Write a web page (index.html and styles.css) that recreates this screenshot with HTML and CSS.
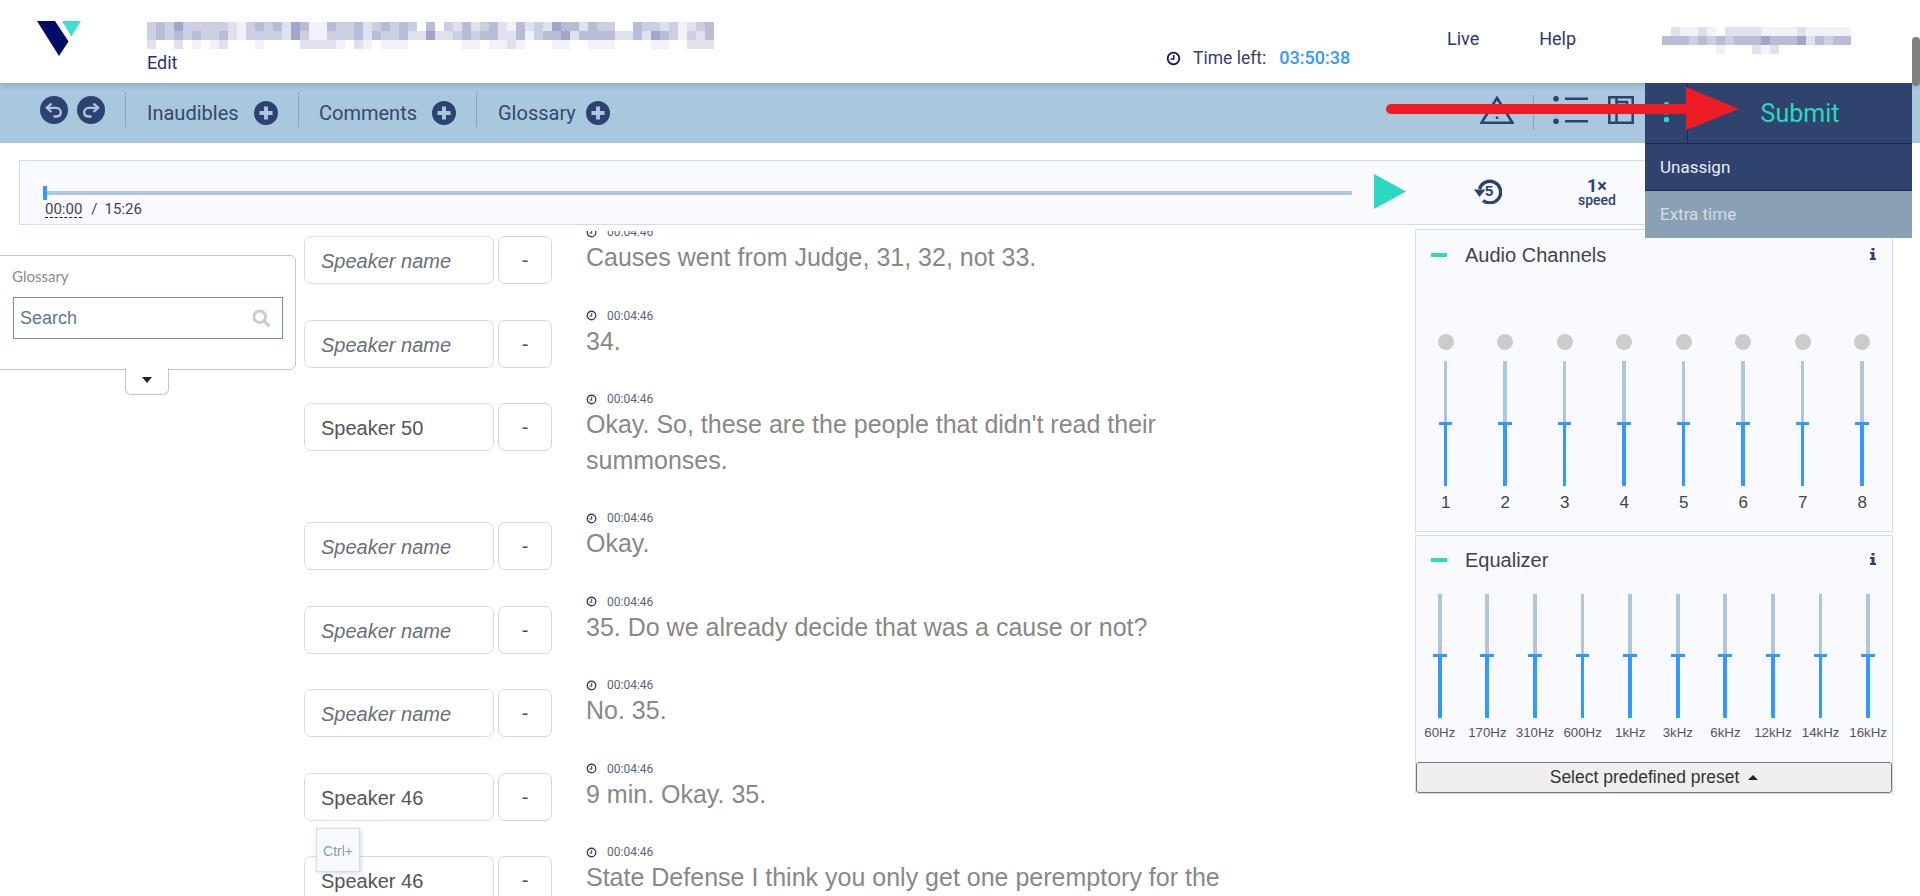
FILE: index.html
```html
<!DOCTYPE html>
<html lang="en">
<head>
<meta charset="utf-8">
<title>Transcript editor</title>
<link rel="stylesheet" href="styles.css">
</head>
<body>
<svg width="0" height="0" class="defs">
  <symbol id="clock" viewBox="0 0 16 16"><circle cx="8" cy="8" r="6.2" fill="none" stroke="currentColor" stroke-width="1.9"/><path d="M8.3 4.2V8.6H5" fill="none" stroke="currentColor" stroke-width="1.5"/></symbol>
  <symbol id="plus" viewBox="0 0 24 24"><circle cx="12" cy="12" r="12" fill="#2e4272"/><path d="M12 5.5v13M5.5 12h13" stroke="#a9c8dd" stroke-width="4"/></symbol>
</svg>

<header class="topbar">
  <svg class="logo" viewBox="0 0 44 35" width="44" height="35"><path d="M0 0H18L31.500 20.500L22 35Z" fill="#020c66"/><path d="M25 0H44L34.300 15.500Z" fill="#3fe0cf"/></svg>
  <div class="title-block">
    <svg class="blur blur-title" viewBox="0 0 64 3" width="576" height="27" shape-rendering="crispEdges">
      <path class="l1" d="M10 .5h1M18 .5h2M40 .5h1M59 .5h1M10 1.500h1M18 1.500h2M42 1.500h1M59 1.500h1M5 2.500h1M7 2.500h1M12 2.500h1M21 2.500h1M24 2.500h1M26 2.500h3M35 2.500h2M38 2.500h2M41 2.500h1M45 2.500h2M49 2.500h3M56 2.500h2"/>
      <path class="l2" d="M9 .5h1M15 .5h1M24 .5h1M34 .5h1M36 .5h1M39 .5h1M42 .5h1M44 .5h1M48 .5h1M57 .5h1M60 .5h1M9 1.500h1M15 1.500h1M24 1.500h1M29 1.500h2M32 1.500h2M39 1.500h2M47 1.500h1M52 1.500h2M55 1.500h1M61 1.500h1M0 2.500h1M3 2.500h1M8 2.500h1M17 2.500h4M23 2.500h1M40 2.500h1M60 2.500h3"/>
      <path class="l3" d="M0 .5h1M2 .5h1M4 .5h5M11 .5h1M13 .5h1M21 .5h2M25 .5h1M27 .5h1M29 .5h1M33 .5h1M37 .5h1M43 .5h1M50 .5h2M55 .5h2M58 .5h1M61 .5h1M0 1.500h1M2 1.500h1M4 1.500h1M6 1.500h2M11 1.500h4M17 1.500h1M20 1.500h3M26 1.500h2M34 1.500h1M36 1.500h1M43 1.500h1M58 1.500h1M60 1.500h1"/>
      <path class="l4" d="M1 .5h1M12 .5h1M14 .5h1M17 .5h1M20 .5h1M23 .5h1M26 .5h1M28 .5h1M31 .5h1M35 .5h1M38 .5h1M41 .5h1M46 .5h2M49 .5h1M54 .5h1M62 .5h1M1 1.500h1M3 1.500h1M5 1.500h1M8 1.500h1M23 1.500h1M25 1.500h1M28 1.500h1M35 1.500h1M37 1.500h2M41 1.500h1M44 1.500h2M48 1.500h4M54 1.500h1M57 1.500h1M62 1.500h1"/>
      <path class="l5" d="M3 .5h1M16 .5h1M45 .5h1M16 1.500h1M31 1.500h1M46 1.500h1M56 1.500h1"/>
    </svg>
    <a class="edit-link">Edit</a>
  </div>
  <div class="time-left">
    <svg class="clock-big"><use href="#clock"/></svg>
    <span>Time left:</span>
    <strong>03:50:38</strong>
  </div>
  <nav class="top-nav"><a>Live</a><a>Help</a></nav>
  <svg class="blur blur-user" viewBox="0 0 21 3" width="189" height="27" shape-rendering="crispEdges">
    <path class="l1" d="M2 .5h2M5 .5h1M11 .5h4M16 .5h5M6 2.500h1M11 2.500h1"/>
    <path class="l2" d="M1 .5h1M4 .5h1M7 .5h4M15 .5h1M16 1.500h1M10 2.500h1M12 2.500h1"/>
    <path class="l3" d="M3 1.500h1M5 1.500h1M7 1.500h1M18 1.500h1"/>
    <path class="l4" d="M0 1.500h3M4 1.500h1M6 1.500h1M8 1.500h3M12 1.500h3M17 1.500h1M19 1.500h2"/>
    <path class="l5" d="M11 1.500h1M15 1.500h1"/>
  </svg>
</header>

<section class="toolbar">
  <button class="round-btn"><svg viewBox="0 0 28 28" width="28" height="28"><circle cx="14" cy="14" r="14" fill="#2e4272"/><path d="M11.500 7.500L6.800 11.800L11.500 16M7.500 11.800H16C19 11.800 20.800 14 20.800 16.300C20.800 18.800 19 20.500 16.500 20.500H13.500" fill="none" stroke="#a9c8dd" stroke-width="2.300"/></svg></button>
  <button class="round-btn"><svg viewBox="0 0 28 28" width="28" height="28"><circle cx="14" cy="14" r="14" fill="#2e4272"/><path d="M16.500 7.500L21.200 11.800L16.500 16M20.500 11.800H12C9 11.800 7.200 14 7.200 16.300C7.200 18.800 9 20.500 11.500 20.500H14.500" fill="none" stroke="#a9c8dd" stroke-width="2.300"/></svg></button>
  <span class="tool-sep first"></span>
  <span class="tool-label inaudibles">Inaudibles</span><svg class="plus-icon"><use href="#plus"/></svg>
  <span class="tool-sep"></span>
  <span class="tool-label comments">Comments</span><svg class="plus-icon"><use href="#plus"/></svg>
  <span class="tool-sep"></span>
  <span class="tool-label glossary-label">Glossary</span><svg class="plus-icon tight"><use href="#plus"/></svg>
  <div class="tool-right">
    <svg class="tool-icon" viewBox="0 0 34 28" width="34" height="28"><path d="M17 2L32.500 26.700H1.500Z" fill="none" stroke="#2e4272" stroke-width="2.600"/><path d="M17 11v7M17 20.500v2.500" stroke="#2e4272" stroke-width="2.400"/></svg>
    <span class="tool-sep slim"></span>
    <svg class="tool-icon" viewBox="0 0 35 28" width="35" height="28"><circle cx="3" cy="2.800" r="2.800" fill="#2e4272"/><circle cx="3" cy="25.200" r="2.800" fill="#2e4272"/><path d="M12 2.800H35M12 25.200H35" stroke="#2e4272" stroke-width="2.600"/></svg>
    <svg class="tool-icon layout" viewBox="0 0 26 28" width="26" height="28"><path d="M1.300 1.300H24.700V26.700H1.300ZM8.500 1.300V26.700M8.500 6H19V16" fill="none" stroke="#2e4272" stroke-width="2.500"/></svg>
  </div>
</section>

<div class="action-menu">
  <div class="action-head">
    <span class="kebab"><svg viewBox="0 0 5 20" width="5" height="20"><rect y="0" width="5" height="5" rx="1.500" fill="#2bd9c0"/><rect y="7.500" width="5" height="5" rx="1.500" fill="#2bd9c0"/><rect y="15" width="5" height="5" rx="1.500" fill="#2bd9c0"/></svg></span>
    <span class="submit">Submit</span>
  </div>
  <div class="action-item">Unassign</div>
  <div class="action-item muted">Extra time</div>
</div>

<svg class="red-arrow" viewBox="0 0 353 43" width="353" height="43"><path d="M5 22H305" stroke="#ed1c24" stroke-width="10" stroke-linecap="round"/><path d="M300 0L353 22L300 43Z" fill="#ed1c24"/></svg>
<div class="scroll-thumb"></div>

<section class="player">
  <div class="timeline">
    <div class="track"><span class="track-thumb"></span></div>
    <div class="time-text"><span class="time-current">00:00</span><span class="time-slash">/</span><span>15:26</span></div>
  </div>
  <svg class="play" viewBox="0 0 32 35" width="32" height="35"><path d="M0 0L32 17.500L0 35Z" fill="#2bd9c0"/></svg>
  <div class="replay">
    <svg viewBox="0 0 28 26" width="28" height="26"><path d="M5.500 11A10.800 10.800 0 1 1 9 22.500" fill="none" stroke="#2e4272" stroke-width="3.400"/><path d="M0 11.500H11.500L5.500 19Z" fill="#2e4272"/></svg>
    <span>5</span>
  </div>
  <div class="speed"><b>1×</b><span>speed</span></div>
</section>

<main class="workspace">
  <aside class="left-col">
    <div class="glossary">
      <div class="glossary-title">Glossary</div>
      <div class="search">
        <span>Search</span>
        <svg viewBox="0 0 18 18" width="19" height="19"><circle cx="7.300" cy="7.300" r="5.500" fill="none" stroke="#cccccc" stroke-width="2.800"/><path d="M11.500 11.500L16.500 16.500" stroke="#cccccc" stroke-width="3.200"/></svg>
      </div>
      <div class="glossary-tab"><i></i></div>
    </div>
  </aside>

  <section class="transcript">
    <div class="rows">
      <article class="row"><div class="speaker empty">Speaker name</div><div class="dash">-</div><div class="utterance"><div class="stamp"><svg><use href="#clock"/></svg>00:04:46</div><p>Causes went from Judge, 31, 32, not 33.</p></div></article>
      <article class="row"><div class="speaker empty">Speaker name</div><div class="dash">-</div><div class="utterance"><div class="stamp"><svg><use href="#clock"/></svg>00:04:46</div><p>34.</p></div></article>
      <article class="row"><div class="speaker">Speaker 50</div><div class="dash">-</div><div class="utterance"><div class="stamp"><svg><use href="#clock"/></svg>00:04:46</div><p>Okay. So, these are the people that didn't read their summonses.</p></div></article>
      <article class="row"><div class="speaker empty">Speaker name</div><div class="dash">-</div><div class="utterance"><div class="stamp"><svg><use href="#clock"/></svg>00:04:46</div><p>Okay.</p></div></article>
      <article class="row"><div class="speaker empty">Speaker name</div><div class="dash">-</div><div class="utterance"><div class="stamp"><svg><use href="#clock"/></svg>00:04:46</div><p>35. Do we already decide that was a cause or not?</p></div></article>
      <article class="row"><div class="speaker empty">Speaker name</div><div class="dash">-</div><div class="utterance"><div class="stamp"><svg><use href="#clock"/></svg>00:04:46</div><p>No. 35.</p></div></article>
      <article class="row"><div class="speaker">Speaker 46</div><div class="dash">-</div><div class="utterance"><div class="stamp"><svg><use href="#clock"/></svg>00:04:46</div><p>9 min. Okay. 35.</p></div></article>
      <article class="row"><div class="speaker">Speaker 46<span class="hint">Ctrl+</span></div><div class="dash">-</div><div class="utterance"><div class="stamp"><svg><use href="#clock"/></svg>00:04:46</div><p>State Defense I think you only get one peremptory for the</p></div></article>
    </div>
  </section>

  <aside class="right-col">
    <section class="panel audio">
      <div class="panel-head"><i class="minus"></i><h2>Audio Channels</h2><svg class="info" viewBox="0 0 6 12" width="6" height="12"><path d="M1.500 0h3v2.500h-3ZM0 4h4.500v6H6v2H0v-2h1.500V6H0Z" fill="#2e4272"/></svg></div>
      <div class="channels">
        <div class="channel thin"><i class="dot"></i><div class="slider"></div><span>1</span></div>
        <div class="channel"><i class="dot"></i><div class="slider"></div><span>2</span></div>
        <div class="channel thin"><i class="dot"></i><div class="slider"></div><span>3</span></div>
        <div class="channel"><i class="dot"></i><div class="slider"></div><span>4</span></div>
        <div class="channel thin"><i class="dot"></i><div class="slider"></div><span>5</span></div>
        <div class="channel"><i class="dot"></i><div class="slider"></div><span>6</span></div>
        <div class="channel thin"><i class="dot"></i><div class="slider"></div><span>7</span></div>
        <div class="channel"><i class="dot"></i><div class="slider"></div><span>8</span></div>
      </div>
    </section>
    <section class="panel equalizer">
      <div class="panel-head eq-head"><i class="minus"></i><h2>Equalizer</h2><svg class="info" viewBox="0 0 6 12" width="6" height="12"><path d="M1.500 0h3v2.500h-3ZM0 4h4.500v6H6v2H0v-2h1.500V6H0Z" fill="#2e4272"/></svg></div>
      <div class="bands">
        <div class="band"><div class="slider"></div><span>60Hz</span></div>
        <div class="band"><div class="slider"></div><span>170Hz</span></div>
        <div class="band"><div class="slider"></div><span>310Hz</span></div>
        <div class="band thin"><div class="slider"></div><span>600Hz</span></div>
        <div class="band"><div class="slider"></div><span>1kHz</span></div>
        <div class="band"><div class="slider"></div><span>3kHz</span></div>
        <div class="band"><div class="slider"></div><span>6kHz</span></div>
        <div class="band"><div class="slider"></div><span>12kHz</span></div>
        <div class="band thin"><div class="slider"></div><span>14kHz</span></div>
        <div class="band"><div class="slider"></div><span>16kHz</span></div>
      </div>
      <button class="preset">Select predefined preset <i></i></button>
    </section>
  </aside>
</main>
</body>
</html>
```

FILE: styles.css
```css
* { box-sizing: border-box; }
html, body { margin: 0; height: 100%; overflow: hidden; background: #fff; }
body { position: relative; width: 1920px; height: 896px; font-family: "Liberation Sans", Arial, sans-serif; color: #333; }
.defs { position: absolute; }

/* header */
.topbar { position: relative; z-index: 2; display: flex; align-items: flex-start; height: 83px; padding-left: 37px; background: #fff; box-shadow: 0 1px 7px rgba(40, 70, 100, .3); font-family: Roboto, sans-serif; }
.logo { margin-top: 21px; flex: none; }
.title-block { display: flex; flex-direction: column; margin: 22px 0 0 66px; width: 576px; }
.blur { display: block; fill: none; stroke-width: 1; }
.l1 { stroke: #f1f1f7; }
.l2 { stroke: #e1e1ee; }
.l3 { stroke: #cdcee2; }
.l4 { stroke: #b9bbd7; }
.l5 { stroke: #a2a5cb; }
.edit-link { margin-top: 5px; font-size: 18px; line-height: 18px; color: #2b3080; }
.time-left { display: flex; align-items: center; margin: 49px 0 0 443px; width: 281px; font-size: 17.500px; line-height: 18px; color: #3a4070; flex: none; }
.clock-big { width: 15px; height: 15px; color: #0a1464; margin-right: 12px; }
.time-left strong { margin-left: 13px; font-weight: 500; color: #3399ff; font-size: 18px; }
.top-nav { display: flex; gap: 60px; margin: 30px 0 0 0; width: 215px; font-size: 18px; line-height: 18px; color: #2c3470; flex: none; }
.blur-user { margin-top: 27px; flex: none; }

/* toolbar */
.toolbar { display: flex; align-items: center; height: 60px; padding: 0 286px 0 40px; background: #a9c8dd; font-family: Roboto, sans-serif; }
.round-btn { width: 28px; height: 28px; padding: 0; margin: -7px 9px 0 0; border: 0; background: none; }
.round-btn svg { display: block; }
.tool-sep { width: 1px; height: 35px; margin: -7px 0 0 20px; background: #8aa5bd; }
.tool-sep.first { margin-left: 11px; }
.tool-sep.slim { margin: 5px 19px 0 19px; }
.tool-label { margin-left: 21px; font-size: 20px; color: #37476f; }
.tool-label.inaudibles { width: 107px; }
.tool-label.comments { width: 113px; margin-left: 20px; }
.tool-label.glossary-label { width: 88px; }
.plus-icon { width: 24px; height: 24px; flex: none; }
.tool-right { display: flex; align-items: center; margin-left: auto; margin-top: -6px; }
.tool-icon { display: block; flex: none; }
.tool-icon.layout { margin-left: 20px; }

/* action menu */
.action-menu { position: absolute; z-index: 3; top: 83px; left: 1645px; width: 267px; color: #fff; font-size: 17px; }
.action-head { display: flex; height: 61px; background: #30426e; border-bottom: 1px solid #1a2a52; }
.kebab { display: flex; align-items: center; justify-content: center; width: 43px; padding-bottom: 3px; border-right: 1px solid #1a2a52; }
.submit { flex: 1; text-align: center; line-height: 62px; font-family: Roboto, sans-serif; font-size: 25px; color: #2bd9c0; }
.action-item { height: 47px; padding-left: 15px; line-height: 47px; background: #30426e; border-bottom: 1px solid #1a2a52; color: #e8eef6; font-family: Roboto, sans-serif; }
.action-item.muted { height: 47px; background: #8ba0b4; border: 0; color: #d3dde6; }
.red-arrow { position: absolute; z-index: 4; top: 87px; left: 1386px; }
.scroll-thumb { position: absolute; z-index: 4; top: 37px; right: 0; width: 8px; height: 49px; border-radius: 4px; background: #808080; }

/* player */
.player { display: flex; align-items: flex-start; width: 1874px; height: 65px; margin: 17px 0 0 19px; padding: 25px 0 0 23px; background: #f8faff; border: 1px solid #cfdeec; }
.timeline { width: 1309px; flex: none; }
.track { position: relative; height: 4px; margin-top: 5px; background: #b0c6dd; }
.track-thumb { position: absolute; left: 0; top: -5px; width: 4px; height: 14px; background: #3399ff; }
.time-text { display: flex; margin: 6px 0 0 2px; font-size: 15px; line-height: 16px; color: #444; font-family: Roboto, sans-serif; }
.time-current { border-bottom: 1px dashed #222; height: 17px; }
.time-slash { margin: 0 7px 0 9px; }
.play { display: block; margin: -12px 0 0 22px; flex: none; }
.replay { position: relative; flex: none; width: 28px; height: 26px; margin: -8px 0 0 68px; }
.replay svg { display: block; }
.replay span { position: absolute; left: 11px; top: 5px; font-size: 15px; line-height: 16px; font-weight: 700; color: #2e4272; }
.speed { display: flex; flex-direction: column; align-items: center; width: 60px; margin: -9px 0 0 65px; color: #2e4272; font-family: Roboto, sans-serif; flex: none; }
.speed b { height: 17px; font-size: 18px; line-height: 17px; }
.speed span { font-size: 14px; line-height: 13px; font-weight: 500; }

/* workspace */
.workspace { display: flex; align-items: flex-start; height: 671px; padding-top: 4px; }
.left-col { width: 304px; flex: none; }
.glossary { position: relative; width: 298px; height: 115px; margin: 26px 0 0 -2px; padding: 11px 12px 0 13px; border: 1px solid #c4c4c4; border-radius: 0 6px 6px 0; background: #fff; }
.glossary-title { font-family: Lato, sans-serif; font-size: 15px; line-height: 18px; color: #8b8b8b; font-weight: 400; }
.search { display: flex; align-items: center; justify-content: space-between; height: 42px; margin: 12px 0 0 1px; padding: 0 11px 0 6px; border: 1px solid #6f93b8; font-size: 18px; color: #66758a; }
.glossary-tab { position: absolute; left: 126px; top: 112px; width: 44px; height: 27px; background: #fff; border: 1px solid #c4c4c4; border-top: 0; border-radius: 0 0 6px 6px; }
.glossary-tab i { position: absolute; left: 16px; top: 9px; border: 5.500px solid transparent; border-top: 6px solid #222; border-bottom: 0; }

.transcript { flex: none; width: 1111px; height: 665px; margin-top: 2px; overflow: hidden; }
.rows { margin-top: -7px; }
.row { display: flex; align-items: flex-start; }
.speaker { position: relative; width: 190px; height: 48px; margin-top: 12px; padding-left: 16px; border: 1px solid #dcdcdc; border-radius: 7px; font-size: 20px; line-height: 48px; color: #555; background: #fff; flex: none; }
.speaker.empty { font-style: italic; color: #6a7078; }
.dash { width: 54px; height: 48px; margin: 12px 0 0 4px; border: 1px solid #d8d8d8; border-radius: 7px; font-size: 20px; line-height: 47px; text-align: center; color: #555; flex: none; }
.utterance { width: 660px; margin-left: 34px; padding-bottom: 32px; flex: none; }
.stamp { display: flex; align-items: center; height: 16px; font-size: 12px; color: #5a6478; font-family: Roboto, sans-serif; }
.stamp svg { width: 11px; height: 11px; margin-right: 10px; color: #333f55; }
.utterance p { margin: 0; font-size: 25px; line-height: 35.500px; color: #888; }
.hint { position: absolute; z-index: 1; left: 11px; top: -29px; width: 44px; height: 44px; background: #f8faff; border: 1px solid #d0dfee; box-shadow: 1px 1px 4px rgba(120, 140, 170, .35); font-size: 14px; line-height: 44px; text-align: center; font-style: normal; color: #8a9ab0; }

.right-col { width: 478px; flex: none; }
.panel { background: #f8faff; border: 1px solid #cfdeec; }
.audio { height: 303px; margin-bottom: 3px; }
.equalizer { height: 259px; }
.panel-head { display: flex; align-items: center; height: 50px; padding: 0 15px; }
.eq-head { height: 48px; }
.minus { width: 16px; height: 4px; background: #2bd9c0; }
.panel-head h2 { margin: 0 0 0 18px; font-size: 20px; font-weight: 400; color: #444; }
.info { margin-left: auto; margin-right: 1px; margin-top: -2px; }
.channels { display: grid; grid-template-columns: repeat(8, 1fr); margin-top: 54px; }
.bands { display: grid; grid-template-columns: repeat(10, 1fr); margin-top: 10px; }
.channel, .band { display: flex; flex-direction: column; align-items: center; }
.dot { width: 16px; height: 16px; margin-bottom: 11px; border-radius: 50%; background: #cccccc; }
.slider { position: relative; width: 4px; height: 125px; background: #b0c6dd; }
.thin .slider { width: 3px; }
.band .slider { height: 124px; }
.slider::before { content: ""; position: absolute; left: 0; right: 0; top: 61px; bottom: 0; background: #3399ff; }
.slider::after { content: ""; position: absolute; left: -5px; width: 14px; top: 61px; height: 3px; background: #3399ff; }
.thin .slider::after { width: 13px; }
.band .slider::before, .band .slider::after { top: 60px; }
.channel span { margin-top: 8px; font-size: 17px; line-height: 18px; color: #444; }
.band span { margin-top: 7px; font-size: 13.300px; line-height: 16px; color: #555; white-space: nowrap; }
.preset { display: block; width: 476px; height: 31px; margin-top: 21px; padding: 0; background: #efefef; border: 1px solid #767676; border-radius: 3px; font-family: inherit; font-size: 17.500px; color: #333; }
.preset i { display: inline-block; vertical-align: 3px; margin-left: 4px; border: 5px solid transparent; border-bottom: 5px solid #222; border-top: 0; }
```
